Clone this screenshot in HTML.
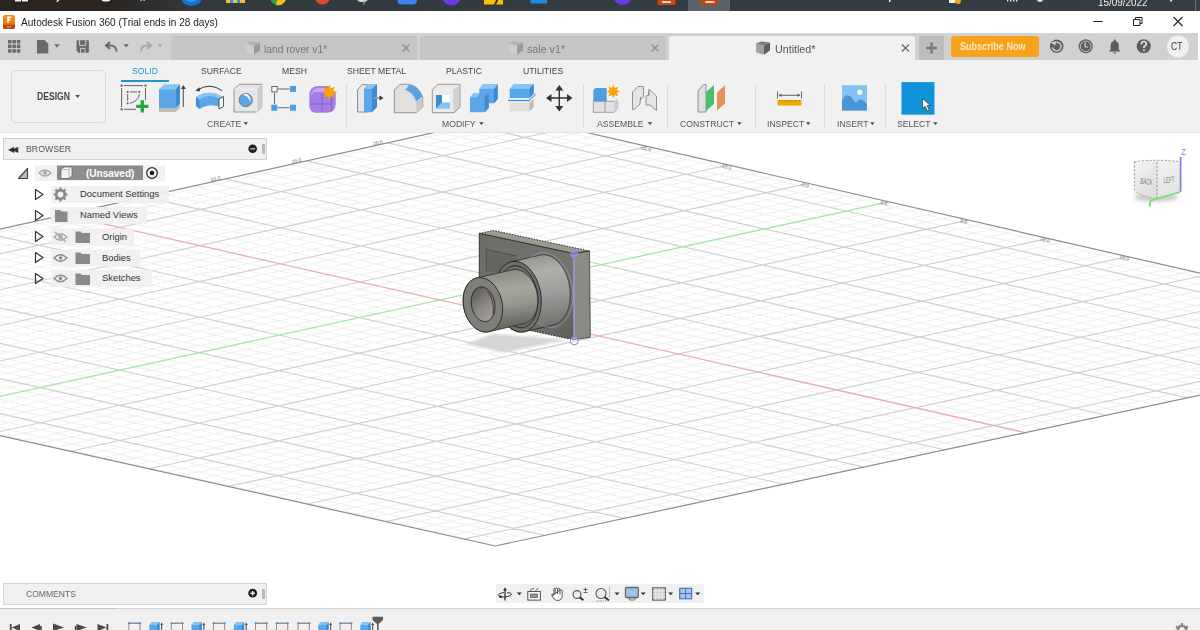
<!DOCTYPE html>
<html><head><meta charset="utf-8">
<style>
*{margin:0;padding:0;box-sizing:border-box}
html,body{width:1200px;height:630px;overflow:hidden;background:#fff;font-family:"Liberation Sans",sans-serif;position:relative}
.a{position:absolute}
#taskbar{left:0;top:0;width:1200px;height:11px;background:linear-gradient(90deg,#2b231e 0,#2c2520 110px,#323a3e 200px,#343e44 100%)}
#title{left:0;top:11px;width:1200px;height:22px;background:#fff}
#tool{left:0;top:33px;width:1198px;height:27px;background:#d1d1d1}
.tab{top:36px;height:24px;width:246px;background:#c5c5c5;border-radius:3px 3px 0 0}
.tabt{font-size:11.5px;color:#777;top:7px;white-space:nowrap;transform-origin:0 0}
#ribbon{left:0;top:60px;width:1200px;height:73px;background:#f1f1f1;border-bottom:1px solid #e2e2e2}
.rt{font-size:9.8px;color:#444;top:5px;white-space:nowrap;transform:scaleX(0.88);transform-origin:0 0}
.gl{font-size:9.8px;color:#555;top:58px;white-space:nowrap;transform:scaleX(0.88);transform-origin:0 0}
.sep{top:24px;width:1px;height:44px;background:#dcdcdc}
#vp{left:0;top:133px;width:1200px;height:475px;background:#fff;overflow:hidden}
#timeline{left:0;top:608px;width:1200px;height:22px;background:#f0f0f0;border-top:1px solid #d6d6d6}
.row{height:17px;background:rgba(240,240,240,0.85)}
.rtx{font-size:9.4px;color:#333;top:2px;white-space:nowrap}
</style></head><body>
<div id="taskbar" class="a" style="overflow:hidden">
<svg class="a" style="left:0;top:0" width="1200" height="11">
 <rect x="688" y="0" width="42" height="11" fill="#5b6368"/>
 <rect x="1195" y="0" width="1" height="11" fill="#6a7378"/>
 <g fill="#f2f2f2"><rect x="15" y="-2" width="6" height="3.5"/><rect x="22" y="-2" width="6" height="3.5"/><path d="M56 1.5 l3 -3 l1.5 0.5 l-3 3z"/><ellipse cx="106" cy="-0.5" rx="4.5" ry="2"/><rect x="140.5" y="-1" width="1.2" height="2"/><rect x="143.5" y="-1" width="1.2" height="2"/></g>
 <ellipse cx="191.5" cy="-3" rx="10.5" ry="9" fill="#1c6fcf"/>
 <ellipse cx="191.5" cy="-4" rx="7" ry="6" fill="#2a9be8"/>
 <rect x="226" y="-4" width="19" height="7" fill="#f2c33a"/><rect x="230" y="-4" width="3" height="7" fill="#3e8bd6"/><rect x="237" y="-4" width="3" height="7" fill="#3e8bd6"/>
 <circle cx="278" cy="-3" r="8" fill="#2da64a"/><path d="M278 -3 L286 -1 A8 8 0 0 1 276 5z" fill="#f4c020"/>
 <circle cx="322.5" cy="-3" r="7.5" fill="#e2492a"/>
 <path d="M354 -2 h17 l-6 4 h-5z" fill="#bfe0f5"/><rect x="363.5" y="0" width="1" height="5" fill="#e0a040"/>
 <rect x="397.5" y="-6" width="19.5" height="10.5" rx="4" fill="#3d7ef2"/>
 <circle cx="451.5" cy="-4" r="9.5" fill="#6a3be2"/><circle cx="451.5" cy="-5" r="4.5" fill="#fff"/>
 <rect x="484" y="-4" width="19" height="8.5" fill="#f6c200"/><path d="M494 4.5 l3 -6 h2 l-3 6z" fill="#222"/>
 <rect x="530.5" y="-4" width="16.5" height="7.5" fill="#1e8ae6"/>
 <circle cx="622.5" cy="-4" r="9" fill="#6a3be2"/><circle cx="622.5" cy="-5" r="4" fill="#fff"/>
 <rect x="657.5" y="-4" width="18" height="9" rx="1" fill="#c2460e"/>
 <rect x="701" y="-4" width="17" height="9" rx="1" fill="#c2460e"/>
 <g fill="#f0d0b0"><rect x="662" y="1" width="9" height="2"/><rect x="705.5" y="1" width="9" height="2"/></g>
 <g fill="#f2f2f2"><rect x="889" y="-1" width="1.5" height="3"/><rect x="949" y="-1" width="6" height="4"/><rect x="1007" y="-1" width="1.3" height="2.5"/><rect x="1010" y="-1" width="1.3" height="2.5"/><rect x="1013" y="-1" width="1.3" height="2.5"/><rect x="1016" y="-1" width="1.3" height="2.5"/><circle cx="1040" cy="-1" r="3"/><path d="M1169 -1 l2 3 l2 -3z"/></g>
 <circle cx="958" cy="1" r="3" fill="#f3a21a"/>
</svg>
<div class="a" style="left:1098px;top:-3.6px;font-size:11.5px;color:#f2f2f2;white-space:nowrap;transform:scaleX(0.86);transform-origin:0 0">15/09/2022</div>
</div>
<div id="title" class="a">
  <svg class="a" style="left:2px;top:3px" width="15" height="17"><defs><linearGradient id="fg" x1="0" y1="0" x2="0" y2="1"><stop offset="0" stop-color="#f7931e"/><stop offset="1" stop-color="#e4601a"/></linearGradient></defs><rect x="1" y="1" width="12" height="14" rx="2" fill="url(#fg)"/><path d="M1 10.8 H13 V13 Q13 15 11 15 H3 Q1 15 1 13Z" fill="#b9450f"/><path d="M6 8.8 V3.2 H9.2 M6 5.8 H8.5" fill="none" stroke="#fff" stroke-width="1.5"/><path d="M5 12.9 h4" stroke="#f3c8a8" stroke-width="0.9"/></svg>
  <div class="a" style="left:20.5px;top:6px;font-size:10.4px;color:#1a1a1a;white-space:nowrap;transform:scaleX(0.97);transform-origin:0 0">Autodesk Fusion 360 (Trial ends in 28 days)</div>
</div>
<div id="tool" class="a"></div>
<div class="a tab" style="left:171px"><div class="a tabt" style="left:93.2px;transform:scaleX(0.89)">land rover v1*</div></div>
<div class="a tab" style="left:420px"><div class="a tabt" style="left:106.7px;transform:scaleX(0.93)">sale v1*</div></div>
<div class="a tab" style="left:669px;background:#f0f0f0"><div class="a tabt" style="left:106px;color:#555;transform:scaleX(0.93)">Untitled*</div></div>
<div class="a" style="left:919px;top:36px;width:25px;height:24px;background:#bdbdbd;border-radius:2px"></div>
<div class="a" style="left:951px;top:36px;width:88px;height:21px;background:#f7a21b;border-radius:3px"></div><div class="a" style="left:960px;top:40.2px;color:#fde6c2;font-size:10.5px;font-weight:bold;white-space:nowrap;transform:scaleX(0.865);transform-origin:0 0">Subscribe Now</div>

<!-- TITLE/TOOLBAR ICONS -->
<svg class="a" style="left:0;top:0" width="1200" height="62">
 <g fill="#6a6a6a">
  <rect x="8" y="40" width="3.5" height="3.5"/><rect x="12.4" y="40" width="3.5" height="3.5"/><rect x="16.8" y="40" width="3.5" height="3.5"/>
  <rect x="8" y="44.6" width="3.5" height="3.5"/><rect x="12.4" y="44.6" width="3.5" height="3.5"/><rect x="16.8" y="44.6" width="3.5" height="3.5"/>
  <rect x="8" y="49.2" width="3.5" height="3.5"/><rect x="12.4" y="49.2" width="3.5" height="3.5"/><rect x="16.8" y="49.2" width="3.5" height="3.5"/>
  <path d="M37 40 h7.5 l3.8 3.8 v9.7 h-11.3z"/>
  <path d="M54.3 44.3 h5.3 l-2.65 3.2z"/>
  <path d="M76.5 41.2 q0 -1 1 -1 h10.4 q1 0 1 1 v10.6 q0 1 -1 1 h-9.4 l-2 -2z"/></g><path d="M79.6 40.4 V45.3 H85.8 V40.4 M80.6 52.8 V48.4 H85 V52.8" fill="none" stroke="#dadada" stroke-width="0.9"/><g fill="#6a6a6a">
  <path d="M123.5 44.3 h5.3 l-2.65 3.2z"/>
 </g>
 <path d="M116.5 51.5 Q116.5 45.5 110 45.5 H106.5 M110 42 L106 45.5 L110 49" fill="none" stroke="#6a6a6a" stroke-width="2"/>
 <path d="M141 51.5 Q141 45.5 147 45.5 H150.5 M147 42 L151 45.5 L147 49" fill="none" stroke="#a9a9a9" stroke-width="2"/>
 <path d="M157.4 44.3 h5.3 l-2.65 3.2z" fill="#a9a9a9"/>
 <!-- window controls -->
 <path d="M1093.3 21.5 h9.4" stroke="#222" stroke-width="1"/>
 <path d="M1133.5 19.5 h6.5 v6 h-6.5z M1135.5 19.5 v-2 h6.5 v6 h-2" fill="none" stroke="#222" stroke-width="1"/>
 <path d="M1173.5 17 L1182.5 26 M1182.5 17 L1173.5 26" stroke="#222" stroke-width="1.1"/>
 <!-- tab icons -->
 <g><path d="M246 43.5 L254 45.5 V54.7 L246 52.5Z" fill="#cdcdcd"/><path d="M254 45.5 L260 42.5 V50.5 L254 54.7Z" fill="#9c9c9c"/><path d="M246 43.5 L251 41.5 L260 42.5 L254 45.5Z" fill="#b2b2b2"/><path d="M509 43.5 L517 45.5 V54.7 L509 52.5Z" fill="#cdcdcd"/><path d="M517 45.5 L523 42.5 V50.5 L517 54.7Z" fill="#9c9c9c"/><path d="M509 43.5 L514 41.5 L523 42.5 L517 45.5Z" fill="#b2b2b2"/><path d="M756 43.5 L764 45.5 V54.7 L756 52.5Z" fill="#a0a0a0"/><path d="M764 45.5 L770 42.5 V50.5 L764 54.7Z" fill="#5e5e5e"/><path d="M756 43.5 L761 41.5 L770 42.5 L764 45.5Z" fill="#7c7c7c"/></g>
 <g stroke="#8a8a8a" stroke-width="1.2">
  <path d="M402.5 44.5 L409.5 51.5 M409.5 44.5 L402.5 51.5"/>
  <path d="M651.5 44.5 L658.5 51.5 M658.5 44.5 L651.5 51.5"/>
  <path d="M902 44.5 L909 51.5 M909 44.5 L902 51.5" stroke="#666"/>
 </g>
 <path d="M931.5 42.5 v11 M926 48 h11" stroke="#7b7b7b" stroke-width="2.3"/>
 <!-- right icons -->
 <circle cx="1056.7" cy="46.3" r="6.8" fill="#5e5e5e"/>
 <path d="M1052.5 47.5 a4.3 4.3 0 1 0 4 -5.3" fill="none" stroke="#d1d1d1" stroke-width="1.4"/>
 <path d="M1051 42.5 l4 3 l1.5 -4.5z" fill="#d1d1d1"/>
 <circle cx="1085.7" cy="46.3" r="7" fill="#5e5e5e"/>
 <circle cx="1085.7" cy="46.3" r="5.3" fill="none" stroke="#d1d1d1" stroke-width="0.9"/>
 <path d="M1085.2 42.5 v4.5 h3" fill="none" stroke="#d1d1d1" stroke-width="1.2"/>
 <path d="M1108.8 51.5 h11.8 l-1.8 -2 v-4 q0 -4.2 -4.1 -4.6 q-4.1 0.4 -4.1 4.6 v4z" fill="#5e5e5e"/>
 <circle cx="1114.7" cy="40.6" r="1.1" fill="#5e5e5e"/>
 <path d="M1112.7 52.5 h4 l-2 1.5z" fill="#5e5e5e"/>
 <circle cx="1143.7" cy="46.3" r="7" fill="#5e5e5e"/>
 <path d="M1141.3 44.3 q0 -2.8 2.5 -2.8 q2.5 0 2.5 2.4 q0 1.6 -2.3 2.6 v1.6" fill="none" stroke="#e0e0e0" stroke-width="1.6"/>
 <circle cx="1143.9" cy="50.3" r="1" fill="#e0e0e0"/>
 <circle cx="1178" cy="46.5" r="11" fill="#f0f0f0"/>
</svg>
<div class="a" style="left:1170.5px;top:41px;font-size:10px;color:#333;transform:scaleX(0.85);transform-origin:0 0">CT</div>
<div id="ribbon" class="a">
  <div class="a" style="left:11px;top:10px;width:95px;height:53px;border:1px solid #dadada;border-radius:4px"></div>
  <div class="a" style="left:37px;top:31px;font-size:10px;font-weight:bold;color:#444;transform:scaleX(0.86);transform-origin:0 0">DESIGN</div>
  <div class="a rt" style="left:132px;color:#1f96d3">SOLID</div>
  <div class="a" style="left:121px;top:20px;width:48px;height:2px;background:#1f96d3"></div>
  <div class="a rt" style="left:201px">SURFACE</div>
  <div class="a rt" style="left:282px">MESH</div>
  <div class="a rt" style="left:347px">SHEET METAL</div>
  <div class="a rt" style="left:446px">PLASTIC</div>
  <div class="a rt" style="left:523px">UTILITIES</div>
  <div class="a gl" style="left:207px">CREATE</div>
  <div class="a gl" style="left:442px">MODIFY</div>
  <div class="a gl" style="left:597px">ASSEMBLE</div>
  <div class="a gl" style="left:680px">CONSTRUCT</div>
  <div class="a gl" style="left:767px">INSPECT</div>
  <div class="a gl" style="left:837px">INSERT</div>
  <div class="a gl" style="left:897px">SELECT</div>
  <div class="a sep" style="left:346px"></div>
  <div class="a sep" style="left:583px"></div>
  <div class="a sep" style="left:667px"></div>
  <div class="a sep" style="left:755px"></div>
  <div class="a sep" style="left:824px"></div>
  <div class="a sep" style="left:885px"></div>
</div>

<!-- RIBBON ICONS -->
<svg class="a" style="left:0;top:0" width="1200" height="133">
 <!-- sketch -->
 <g fill="#555"><rect x="120.6" y="84.6" width="2" height="2"/><rect x="144.5" y="84.6" width="2" height="2"/><rect x="120.6" y="108.3" width="2" height="2"/>
 <rect x="126.8" y="91" width="1.8" height="1.8"/><rect x="138.4" y="91" width="1.8" height="1.8"/><rect x="126.8" y="102.4" width="1.8" height="1.8"/></g>
 <path d="M124 85.6 H143 M121.6 88 V107 M124 109.3 H136 M145.5 88 V100 M130 91.9 H137 M127.7 94 V101 M139.3 94 Q139 101 130 103.3" fill="none" stroke="#555" stroke-width="0.9"/>
 <path d="M140.6 100.3 h3.4 v4.4 h4.4 v3.4 h-4.4 v4.4 h-3.4 v-4.4 h-4.4 v-3.4 h4.4z" fill="#22a845"/>
 <!-- extrude -->
 <path d="M159 108 h16.3 l4.7 -4 v4 l-4.7 4 h-16.3z" fill="#bdbdbd"/>
 <path d="M159 89.3 L164 84.3 H180 L175.3 89.3Z" fill="#86c6f4"/>
 <rect x="159" y="89.3" width="16.3" height="18.7" fill="#5aa6e6"/>
 <path d="M175.3 89.3 L180 84.3 V104 L175.3 108Z" fill="#3c8cd2"/>
 <path d="M183.3 107 V88" stroke="#555" stroke-width="1.1"/><path d="M180.8 89 L183.3 85 L185.8 89Z" fill="#444"/>
 <!-- revolve -->
 <path d="M222 90.7 Q210 82 197.5 90" fill="none" stroke="#333" stroke-width="1"/><path d="M195.5 90.5 L199.5 87.3 L199.8 91.5Z" fill="#333"/>
 <path d="M196 97 Q209 88.5 223 97 L223 108 Q210 102 200 109 L196 106Z" fill="#5aa6e6"/>
 <path d="M196 97 Q209 88.5 223 97 L219.5 99 Q209 93 199.5 99.5Z" fill="#86c6f4"/>
 <path d="M196 97 L199.5 99.5 V109 L196 106Z" fill="#3c8cd2"/>
 <path d="M219 99 L223.5 96.5 V106.5 L219 109Z" fill="#fff" stroke="#333" stroke-width="0.8"/>
 <!-- hole -->
 <path d="M234 89.3 L239 84.3 H261.7 V107 L256.7 112 H234Z" fill="#e6e6e6" stroke="#8a8a8a" stroke-width="0.9"/>
 <path d="M256.7 89.3 L261.7 84.3 V107 L256.7 112Z" fill="#d0d0d0"/>
 <path d="M234 89.3 H256.7 V112" fill="none" stroke="#f4f4f4" stroke-width="0.7"/>
 <circle cx="245.7" cy="100" r="6.6" fill="#5aa6e6" stroke="#6f6f6f" stroke-width="0.9"/>
 <path d="M242.5 94.8 Q249 95.5 250.5 103 Q251.5 96 245.7 93.6Z" fill="#fff"/>
 <!-- pattern -->
 <rect x="271.8" y="86.5" width="5.4" height="5.4" fill="#fff" stroke="#666" stroke-width="1"/>
 <g fill="#4aa0e2"><rect x="290" y="86" width="6" height="6"/><rect x="271.3" y="104.7" width="6" height="6"/><rect x="290" y="104.7" width="6" height="6"/></g>
 <path d="M278 89 H289.5 M274.5 92.5 V104 M278 107.7 H289.5" stroke="#666" stroke-width="1"/>
 <!-- form -->
 <path d="M309.3 96 Q309.3 86 318 86 H328 L335.7 93 V104 Q335.7 112.7 326 112.7 H316 Q309.3 112.7 309.3 105Z" fill="#a47de6"/>
 <path d="M311 96 Q312 88 318.5 88 H327 L331 92 H314Z" fill="#c6a6f4"/>
 <path d="M322 93 V112 M310 104 H332 M331.5 95 V111" stroke="#7f56c8" stroke-width="0.8"/>
 <path d="M329.3 84.3 l1.5 4 l4 -1.5 l-1.5 4 l4 1.5 l-4 1.5 l1.5 4 l-4 -1.5 l-1.5 4 l-1.5 -4 l-4 1.5 l1.5 -4 l-4 -1.5 l4 -1.5 l-1.5 -4 l4 1.5z" fill="#f5a300"/>
 <!-- press pull -->
 <path d="M357.5 90 L362 84.5 H367 V112 H357.5Z" fill="#e6e6e6" stroke="#888" stroke-width="0.9"/>
 <path d="M364 88.7 L367.5 84 H377 L372 88.7Z" fill="#86c6f4"/>
 <rect x="364" y="88.7" width="8" height="23.6" fill="#5aa6e6"/>
 <path d="M372 88.7 L377 84 V107 L372 112.3Z" fill="#3c8cd2"/>
 <path d="M374 98 H380" stroke="#999" stroke-width="1.6"/><path d="M379.5 95.5 L383.5 98 L379.5 100.5Z" fill="#333"/>
 <!-- fillet -->
 <path d="M394.3 90 L400 84.3 H408 Q418 85 422.7 97 V107 L416.5 112.7 H394.3Z" fill="#e0e0e0" stroke="#8a8a8a" stroke-width="0.9"/>
 <path d="M405.5 90 L409 84.8 Q418.5 86 422.5 96.5 L416 101.5 Q414 93 405.5 90Z" fill="#56a4e6"/>
 <path d="M416 101.5 L422.5 97 V107 L416.5 112.5Z" fill="#cacaca"/>
 <!-- shell -->
 <path d="M432.3 90 L438 84.3 H460 V107 L454.3 112.7 H432.3Z" fill="#ebebeb" stroke="#8a8a8a" stroke-width="0.9"/>
 <path d="M453 90 L459.5 84.8 V107 L453.5 112Z" fill="#d2d2d2"/>
 <rect x="436" y="95" width="14" height="13.7" fill="#fff"/>
 <path d="M436 95 H442 V102.5 L436 108.7Z" fill="#3c8cd2"/>
 <path d="M436 108.7 L441.5 102.5 H450 V108.7Z" fill="#82c3f3"/>
 <!-- combine -->
 <path d="M479.3 89 L483 84.3 H497.7 V99 L494 103.3 H479.3Z" fill="#5aa6e6"/>
 <path d="M494 89 L497.7 84.3 V99 L494 103.3Z" fill="#3c8cd2"/>
 <path d="M479.3 89 L483 84.3 H497.7 L494 89Z" fill="#86c6f4"/>
 <path d="M470 97.5 L474 93 H488.7 V108 L484.7 112.3 H470Z" fill="#5aa6e6"/>
 <path d="M484.7 97.5 L488.7 93 V108 L484.7 112.3Z" fill="#3c8cd2"/>
 <path d="M470 97.5 L474 93 H480 L477 97.5Z" fill="#86c6f4"/>
 <!-- split -->
 <path d="M509.7 89 L514 84 H533.7 V93.5 L529.5 98 H509.7Z" fill="#5aa6e6"/>
 <path d="M509.7 89 L514 84 H533.7 L529.5 89Z" fill="#86c6f4"/>
 <path d="M529.5 89 L533.7 84 V93.5 L529.5 98Z" fill="#3c8cd2"/>
 <path d="M508 100.5 H529 L535.7 94" fill="none" stroke="#c8e6fb" stroke-width="3"/>
 <path d="M508 100.5 H529 L535.7 94" fill="none" stroke="#3c8cd2" stroke-width="1"/>
 <path d="M509.7 102.5 H529.5 L533.7 99.3 V107 L529.5 111.3 H509.7Z" fill="#dedede"/>
 <path d="M529.5 102.5 L533.7 99.3 V107 L529.5 111.3Z" fill="#bdbdbd"/>
 <!-- move -->
 <path d="M559.3 88 V108 M549 98 H570" stroke="#333" stroke-width="1.4"/>
 <path d="M559.3 85 L563.3 90.5 H555.3Z M559.3 111.5 L563.3 106 H555.3Z M546 98 L551.5 94 V102Z M572.5 98 L567 94 V102Z" fill="#333"/>
 <!-- assemble -->
 <path d="M593.3 101.3 H617.7 V108.5 L614 112.3 H593.3Z" fill="#e2e2e2" stroke="#999" stroke-width="0.9"/>
 <path d="M605 101.5 V112" stroke="#999" stroke-width="0.9"/>
 <path d="M614 101.3 L617.7 98 V108.5 L614 112.3Z" fill="#cfcfcf"/>
 <path d="M593.3 92 Q593.3 88 597 88 H606.7 V101.3 H593.3Z" fill="#4c9de2"/>
 <path d="M613.3 84.5 l1.3 3.5 l3.5 -1.3 l-1.3 3.5 l3.5 1.3 l-3.5 1.3 l1.3 3.5 l-3.5 -1.3 l-1.3 3.5 l-1.3 -3.5 l-3.5 1.3 l1.3 -3.5 l-3.5 -1.3 l3.5 -1.3 l-1.3 -3.5 l3.5 1.3z" fill="#f5a300"/>
 <!-- joint -->
 <path d="M632.5 92 L638 86.5 H643.5 V97 L640 100 V104 L634 109.5 H632.5Z" fill="#e4e4e4" stroke="#888" stroke-width="0.9"/>
 <path d="M646 96 L649 95 V89 L656.5 96 V110.5 L650 105 H646Z" fill="#e4e4e4" stroke="#888" stroke-width="0.9"/>
 <path d="M648.5 91 V96 M640.5 97 V101" stroke="#4c9de2" stroke-width="1"/>
 <!-- construct -->
 <path d="M698 91 L703.5 84.5 H706 V112 H698Z" fill="#e0e0e0" stroke="#888" stroke-width="0.9"/>
 <path d="M706 92 L714 85 V104 L706 111Z" fill="#4cbf6a"/>
 <path d="M717 92.5 L725 85 V103.5 L717 110.5Z" fill="#e99258"/>
 <!-- inspect -->
 <path d="M777.5 91.5 V98.5 M801.5 91.5 V98.5 M779 95.3 H800" stroke="#666" stroke-width="1"/>
 <path d="M778.5 95.3 L781.5 93.5 V97Z M800.5 95.3 L797.5 93.5 V97Z" fill="#666"/>
 <rect x="777.5" y="100" width="24" height="5.5" fill="#f4a700"/>
 <path d="M779.5 100 v1.5 M782 100 v1.5 M784.5 100 v1.5 M787 100 v1.5 M789.5 100 v1.5 M792 100 v1.5 M794.5 100 v1.5 M797 100 v1.5 M799.5 100 v1.5" stroke="#a06a00" stroke-width="0.6"/>
 <!-- insert -->
 <rect x="842" y="85.2" width="25" height="25.4" fill="#80c4f5"/>
 <path d="M842 100 Q847 91.5 852 98 Q854 101 856 103 Q860 96.5 864 101 L867 104 V110.6 H842Z" fill="#4a95d6"/>
 <circle cx="859.8" cy="92.2" r="2.6" fill="#fdfde0"/>
 <!-- select -->
 <rect x="901.5" y="82.1" width="33" height="32.6" fill="#1193d9"/>
 <circle cx="916" cy="98" r="10" fill="none" stroke="#27a58a" stroke-width="0.8" stroke-dasharray="1 3" opacity="0.6"/>
 <path d="M922.5 98.5 V108.5 L925 106.2 L927.5 111 L929.3 110.2 L927 105.5 H930.3Z" fill="#fff" stroke="#333" stroke-width="0.7"/>
</svg>
<svg class="a" style="left:0;top:0" width="1200" height="133"><g fill="#444">
<path d="M75.3 95 h4.6 l-2.3 3z"/>
<path d="M243.6 122.2 h4.4 l-2.2 2.8z"/><path d="M479.2 122.2 h4.4 l-2.2 2.8z"/><path d="M647.8 122.2 h4.4 l-2.2 2.8z"/><path d="M737.2 122.2 h4.4 l-2.2 2.8z"/><path d="M806 122.2 h4.4 l-2.2 2.8z"/><path d="M870.2 122.2 h4.4 l-2.2 2.8z"/><path d="M933.2 122.2 h4.4 l-2.2 2.8z"/>
</g></svg>
<div id="vp" class="a"></div>
<div class="a" style="left:0;top:133px;width:1200px;height:475px;overflow:hidden"><svg width="1200" height="630" viewBox="0 0 1200 630" style="position:absolute;left:0;top:-133px">
<path d="M-456.4 333.6L518.6 117.0M-440.4 337.2L534.8 120.7M-424.3 340.8L550.9 124.4M-392.2 348.0L583.2 131.8M-376.1 351.6L599.3 135.5M-360.1 355.1L615.4 139.2M-344.1 358.7L631.6 142.9M-312.0 365.9L663.8 150.3M-296.0 369.4L679.9 153.9M-280.0 373.0L695.9 157.6M-264.0 376.6L712.0 161.3M-232.1 383.7L744.1 168.7M-216.1 387.3L760.2 172.4M-200.1 390.8L776.2 176.1M-184.2 394.4L792.3 179.7M-152.3 401.5L824.3 187.1M-136.3 405.1L840.4 190.8M-120.4 408.6L856.4 194.4M-104.5 412.2L872.4 198.1M-72.7 419.3L904.4 205.4M-56.8 422.8L920.3 209.1M-40.9 426.4L936.3 212.8M-25.0 429.9L952.3 216.4M6.7 437.0L984.2 223.8M22.6 440.6L1000.1 227.4M38.5 444.1L1016.1 231.1M54.3 447.6L1032.0 234.7M86.0 454.7L1063.8 242.0M101.8 458.2L1079.7 245.7M117.6 461.8L1095.6 249.3M133.5 465.3L1111.5 253.0M165.1 472.4L1143.3 260.3M180.9 475.9L1159.2 263.9M196.6 479.4L1175.0 267.5M212.4 482.9L1190.9 271.2M244.0 490.0L1222.6 278.4M259.7 493.5L1238.4 282.1M275.5 497.0L1254.3 285.7M291.2 500.5L1270.1 289.3M322.7 507.5L1301.7 296.6M338.4 511.0L1317.5 300.2M354.1 514.5L1333.3 303.8M369.8 518.1L1349.1 307.5M401.2 525.1L1380.6 314.7M416.9 528.6L1396.4 318.3M432.6 532.1L1412.1 321.9M448.3 535.6L1427.9 325.5M479.6 542.6L1459.4 332.8M-461.4 331.6L497.1 545.6M-445.6 328.1L513.0 542.2M-429.9 324.6L528.8 538.8M-398.3 317.6L560.6 532.0M-382.5 314.1L576.5 528.6M-366.7 310.6L592.4 525.2M-350.8 307.1L608.3 521.8M-319.2 300.0L640.1 515.0M-303.3 296.5L656.0 511.6M-287.5 293.0L672.0 508.2M-271.6 289.4L687.9 504.7M-239.8 282.4L719.9 497.9M-223.9 278.8L735.8 494.5M-208.0 275.3L751.8 491.1M-192.1 271.8L767.8 487.6M-160.2 264.7L799.9 480.8M-144.2 261.1L815.9 477.4M-128.3 257.6L831.9 473.9M-112.3 254.0L848.0 470.5M-80.3 246.9L880.1 463.6M-64.3 243.4L896.2 460.2M-48.3 239.8L912.3 456.7M-32.3 236.2L928.4 453.3M-0.2 229.1L960.6 446.4M15.8 225.5L976.8 442.9M31.9 222.0L992.9 439.5M48.0 218.4L1009.1 436.0M80.1 211.3L1041.4 429.1M96.2 207.7L1057.6 425.6M112.3 204.1L1073.8 422.2M128.5 200.5L1090.0 418.7M160.7 193.3L1122.4 411.8M176.9 189.7L1138.7 408.3M193.1 186.1L1154.9 404.8M209.2 182.6L1171.1 401.3M241.6 175.4L1203.7 394.4M257.8 171.8L1220.0 390.9M274.0 168.1L1236.3 387.4M290.3 164.5L1252.6 383.9M322.7 157.3L1285.2 376.9M339.0 153.7L1301.5 373.4M355.3 150.1L1317.9 369.9M371.5 146.5L1334.2 366.4M404.1 139.2L1367.0 359.4M420.4 135.6L1383.4 355.9M436.8 132.0L1399.8 352.4M453.1 128.3L1416.2 348.9M485.8 121.1L1449.0 341.9M502.1 117.4L1465.4 338.4" stroke="#f0f0f0" stroke-width="1" fill="none"/>
<path d="M-408.2 344.4L567.1 128.1M-328.1 362.3L647.7 146.6M-248.0 380.2L728.1 165.0M-168.2 398.0L808.3 183.4M-9.1 433.5L968.2 220.1M70.2 451.2L1047.9 238.4M149.3 468.8L1127.4 256.6M228.2 486.4L1206.7 274.8M307.0 504.0L1285.9 293.0M385.5 521.6L1364.8 311.1M463.9 539.1L1443.6 329.1M-414.1 321.1L544.7 535.4M-335.0 303.5L624.2 518.4M-255.7 285.9L703.9 501.3M-176.1 268.2L783.9 484.2M-96.3 250.5L864.1 467.1M-16.3 232.7L944.5 449.8M144.6 196.9L1106.2 415.2M225.4 179.0L1187.4 397.9M306.5 160.9L1268.9 380.4M387.8 142.9L1350.6 362.9M469.4 124.7L1432.6 345.4" stroke="#cfcfcf" stroke-width="1.15" fill="none"/>
<path d="M64.0 214.8L1025.2 432.6" stroke="#eeaab2" stroke-width="1.3" fill="none"/>
<path d="M-88.6 415.7L888.4 201.8" stroke="#a6e6a6" stroke-width="1.3" fill="none"/>
<path d="M-463.4 332.1L495.1 546.0L1474.9 336.3L511.6 115.3Z" stroke="#8c8c8c" stroke-width="1.2" fill="none"/>
<text x="640.2" y="150.6" font-family="Liberation Sans" font-size="5" fill="#666" transform="rotate(13 647.7 146.6)">-15.0</text><text x="720.6" y="169.0" font-family="Liberation Sans" font-size="5" fill="#666" transform="rotate(13 728.1 165.0)">-10.0</text><text x="800.8" y="187.4" font-family="Liberation Sans" font-size="5" fill="#666" transform="rotate(13 808.3 183.4)">-5.0</text><text x="880.9" y="205.8" font-family="Liberation Sans" font-size="5" fill="#666" transform="rotate(13 888.4 201.8)">0.0</text><text x="960.7" y="224.1" font-family="Liberation Sans" font-size="5" fill="#666" transform="rotate(13 968.2 220.1)">5.0</text><text x="1040.4" y="242.4" font-family="Liberation Sans" font-size="5" fill="#666" transform="rotate(13 1047.9 238.4)">10.0</text><text x="1119.9" y="260.6" font-family="Liberation Sans" font-size="5" fill="#666" transform="rotate(13 1127.4 256.6)">15.0</text><text x="210.9" y="178.5" font-family="Liberation Sans" font-size="5" fill="#666" transform="rotate(-12 225.4 179.0)">10.0</text><text x="292.0" y="160.4" font-family="Liberation Sans" font-size="5" fill="#666" transform="rotate(-12 306.5 160.9)">15.0</text><text x="373.3" y="142.4" font-family="Liberation Sans" font-size="5" fill="#666" transform="rotate(-12 387.8 142.9)">20.0</text><text x="454.9" y="124.2" font-family="Liberation Sans" font-size="5" fill="#666" transform="rotate(-12 469.4 124.7)">25.0</text>
</svg></div>
<svg class="a" style="left:0;top:0" width="1200" height="630">
<defs>
 <linearGradient id="cyl" gradientUnits="userSpaceOnUse" x1="0" y1="0" x2="0" y2="1" gradientTransform="matrix(7 -32 32 7 0 0)">
 </linearGradient>
 <linearGradient id="cylB" gradientUnits="userSpaceOnUse" x1="530" y1="255" x2="540" y2="335">
  <stop offset="0" stop-color="#8f8f88"/><stop offset="0.22" stop-color="#b0b0a8"/><stop offset="0.45" stop-color="#a0a099"/><stop offset="0.8" stop-color="#7a7a73"/><stop offset="1" stop-color="#5e5e58"/>
 </linearGradient>
 <linearGradient id="cylS" gradientUnits="userSpaceOnUse" x1="495" y1="272" x2="503" y2="333">
  <stop offset="0" stop-color="#8a8a83"/><stop offset="0.3" stop-color="#a6a69e"/><stop offset="0.55" stop-color="#979790"/><stop offset="0.85" stop-color="#6e6e68"/><stop offset="1" stop-color="#5d5d57"/>
 </linearGradient>
 <linearGradient id="plateF" gradientUnits="userSpaceOnUse" x1="480" y1="240" x2="575" y2="335">
  <stop offset="0" stop-color="#6d6d68"/><stop offset="0.6" stop-color="#75756f"/><stop offset="1" stop-color="#5f5f5a"/>
 </linearGradient>
 <linearGradient id="hole" gradientUnits="userSpaceOnUse" x1="472" y1="290" x2="494" y2="318">
  <stop offset="0" stop-color="#5d5a57"/><stop offset="0.55" stop-color="#8a8782"/><stop offset="1" stop-color="#a4a29c"/>
 </linearGradient>
 <filter id="blur" x="-20%" y="-50%" width="140%" height="200%"><feGaussianBlur stdDeviation="1.2"/></filter>
</defs>
<path d="M465.5 343.9L493.5 333.8L567.0 339.8L504.0 352.4Z" fill="#d4d4d4" filter="url(#blur)" opacity="0.95"/>
<path d="M479.3 233.4L573.5 253.5L589.5 251.0L493.5 230.5Z" fill="#9a9a93" stroke="#2a2a28" stroke-width="0.9" stroke-dasharray="1.6 1.2"/>
<path d="M573.5 253.5L589.5 251.0L590.3 337.2L573.5 339.8Z" fill="#8b8b85"/>
<path d="M589.5 251.0L590.3 337.2L573.5 339.8" fill="none" stroke="#3a3a38" stroke-width="0.8"/>
<path d="M479.3 233.4L573.5 253.5L573.5 339.8L479.3 319.5Z" fill="url(#plateF)"/>
<path d="M479.3 233.4L573.5 253.5L589.5 251.0" fill="none" stroke="#2a2a28" stroke-width="0.9"/>
<path d="M479.3 233.4L479.3 319.5" fill="none" stroke="#2a2a28" stroke-width="0.9"/>
<path d="M479.3 319.5L573.5 339.8" fill="none" stroke="#2a2a28" stroke-width="1" stroke-dasharray="1.6 1.2"/>
<path d="M486.4 272 L486.4 249.8 L517 256.3" fill="none" stroke="#2d2d2b" stroke-width="0.9"/>
<path d="M486.4 249.8 L486.4 272 L517 272 L517 256.3Z" fill="#666661"/>
<path d="M494.7 291.7L494.8 288.7L495.1 285.7L495.5 282.8L496.1 280.1L496.9 277.4L497.8 274.9L498.9 272.6L500.2 270.4L501.5 268.4L503.0 266.7L504.6 265.2L506.3 263.9L508.2 262.9L510.0 262.1L512.0 261.6L541.0 254.9L543.0 254.7L545.0 254.7L547.0 255.0L549.0 255.6L551.0 256.4L553.0 257.5L555.0 258.8L556.8 260.4L558.6 262.2L560.4 264.2L562.0 266.4L563.5 268.8L564.8 271.3L566.1 274.0L567.2 276.8L568.1 279.7L568.9 282.7L569.5 285.7L569.9 288.8L570.2 291.9L570.3 295.0L570.2 298.0L569.9 301.0L569.5 303.9L568.9 306.6L568.1 309.3L567.2 311.8L566.1 314.1L564.8 316.3L563.5 318.3L562.0 320.0L560.4 321.5L558.6 322.8L556.8 323.8L555.0 324.6L553.0 325.1L524.0 331.8L522.0 332.0L520.0 332.0L518.0 331.7L516.0 331.1L514.0 330.3L512.0 329.2L510.0 327.9L508.2 326.3L506.4 324.5L504.6 322.5L503.0 320.3L501.5 317.9L500.2 315.4L498.9 312.7L497.8 309.9L496.9 307.0L496.1 304.0L495.5 301.0L495.1 297.9L494.8 294.8Z" fill="url(#cylB)" stroke="#2b2b29" stroke-width="0.8"/>
<path d="M573.0 295.5L572.8 300.4L572.1 305.1L570.9 309.5L569.4 313.6L567.4 317.3L565.1 320.4L562.4 323.1L559.5 325.1L556.3 326.5L553.0 327.3L549.6 327.4L546.1 326.8L542.7 325.6L539.3 323.7L536.1 321.2L533.0 318.2L530.2 314.7L527.7 310.7L525.6 306.4L523.8 301.7L522.4 296.9L521.5 291.9L521.1 286.9L521.1 282.0L521.5 277.2L522.4 272.6L523.8 268.4L525.6 264.5L527.7 261.1L530.2 258.2L533.0 255.8L536.1 254.1L539.3 253.0L542.7 252.6L546.1 252.8L549.6 253.7L553.0 255.3L556.3 257.5L559.5 260.2L562.4 263.5L565.1 267.3L567.4 271.4L569.4 275.9L570.9 280.7L572.1 285.6L572.8 290.6L573.0 295.5Z" fill="rgba(190,170,240,0.10)" stroke="#b3a6e0" stroke-width="0.9" opacity="0.6"/>
<path d="M541.3 301.7L541.1 306.3L540.5 310.7L539.5 314.9L538.0 318.8L536.3 322.3L534.2 325.3L531.8 327.8L529.2 329.8L526.4 331.1L523.4 331.9L520.3 332.0L517.2 331.5L514.1 330.4L511.1 328.7L508.2 326.4L505.5 323.5L503.0 320.2L500.7 316.5L498.8 312.4L497.2 308.1L496.0 303.5L495.2 298.8L494.8 294.1L494.8 289.4L495.2 284.9L496.0 280.5L497.2 276.5L498.8 272.8L500.7 269.5L503.0 266.8L505.5 264.5L508.2 262.9L511.1 261.8L514.1 261.4L517.2 261.6L520.3 262.4L523.4 263.8L526.4 265.8L529.2 268.4L531.8 271.5L534.2 275.0L536.3 278.9L538.0 283.1L539.5 287.6L540.5 292.2L541.1 297.0L541.3 301.7Z" fill="#6e6e69" stroke="#222" stroke-width="0.9"/>
<path d="M538.0 301.0L537.8 305.0L537.3 308.9L536.4 312.6L535.2 316.0L533.7 319.1L531.9 321.7L529.9 323.9L527.6 325.7L525.2 326.9L522.6 327.6L520.0 327.7L517.3 327.2L514.7 326.3L512.1 324.8L509.6 322.8L507.2 320.3L505.1 317.4L503.2 314.1L501.5 310.6L500.1 306.7L499.1 302.7L498.4 298.6L498.0 294.5L498.0 290.4L498.4 286.4L499.1 282.6L500.1 279.1L501.5 275.8L503.2 272.9L505.1 270.5L507.2 268.5L509.6 267.1L512.1 266.1L514.7 265.7L517.3 265.9L520.0 266.6L522.6 267.8L525.2 269.6L527.6 271.8L529.9 274.5L531.9 277.6L533.7 281.0L535.2 284.7L536.4 288.6L537.3 292.7L537.8 296.8L538.0 301.0Z" fill="none" stroke="#222" stroke-width="0.9"/>
<path d="M463.1 300.6L463.2 298.3L463.5 296.0L463.8 293.8L464.3 291.6L465.0 289.6L465.8 287.7L466.7 285.9L467.8 284.3L468.9 282.8L470.2 281.5L471.6 280.4L473.0 279.4L474.6 278.6L476.1 278.1L511.2 270.0L512.9 269.6L514.6 269.5L516.3 269.5L518.0 269.8L519.7 270.3L521.4 270.9L523.1 271.8L524.8 272.9L526.3 274.1L527.9 275.5L529.3 277.1L530.7 278.8L532.0 280.7L533.1 282.6L534.2 284.7L535.1 286.9L535.9 289.1L536.6 291.5L537.1 293.8L537.4 296.2L537.7 298.5L537.8 300.9L537.7 303.2L537.4 305.5L537.1 307.7L536.6 309.9L535.9 311.9L535.1 313.8L534.2 315.6L533.1 317.2L532.0 318.7L530.7 320.0L529.3 321.1L527.9 322.1L526.3 322.9L524.8 323.4L489.7 331.5L488.0 331.9L486.3 332.0L484.6 332.0L482.9 331.7L481.2 331.2L479.5 330.6L477.8 329.7L476.1 328.6L474.6 327.4L473.0 326.0L471.6 324.4L470.2 322.7L468.9 320.8L467.8 318.9L466.7 316.8L465.8 314.6L465.0 312.4L464.3 310.0L463.8 307.7L463.5 305.3L463.2 303.0Z" fill="url(#cylS)" stroke="#2b2b29" stroke-width="0.8"/>
<path d="M502.6 309.0L502.5 312.6L501.9 316.0L501.1 319.2L499.9 322.1L498.4 324.8L496.6 327.1L494.6 329.0L492.4 330.4L490.0 331.4L487.5 331.9L484.9 332.0L482.2 331.5L479.6 330.6L477.0 329.2L474.6 327.4L472.3 325.2L470.1 322.6L468.3 319.7L466.6 316.6L465.3 313.2L464.2 309.6L463.5 306.0L463.2 302.4L463.2 298.8L463.5 295.3L464.2 292.0L465.3 288.9L466.6 286.1L468.3 283.6L470.1 281.5L472.3 279.9L474.6 278.6L477.0 277.9L479.6 277.6L482.2 277.8L484.9 278.5L487.5 279.6L490.0 281.2L492.4 283.2L494.6 285.6L496.6 288.4L498.4 291.4L499.9 294.7L501.1 298.2L501.9 301.8L502.5 305.4L502.6 309.0Z" fill="#7f7f79" stroke="#222" stroke-width="0.9"/>
<path d="M495.0 306.8L494.9 309.1L494.6 311.3L494.1 313.3L493.3 315.2L492.4 316.9L491.4 318.4L490.2 319.6L488.8 320.5L487.4 321.2L485.9 321.5L484.3 321.6L482.7 321.3L481.1 320.7L479.6 319.9L478.1 318.7L476.7 317.3L475.4 315.7L474.3 313.9L473.3 311.9L472.5 309.8L471.9 307.5L471.4 305.2L471.2 302.9L471.2 300.6L471.4 298.4L471.9 296.3L472.5 294.3L473.3 292.5L474.3 290.9L475.4 289.6L476.7 288.5L478.1 287.7L479.6 287.2L481.1 287.0L482.7 287.1L484.3 287.5L485.9 288.3L487.4 289.3L488.8 290.5L490.2 292.0L491.4 293.8L492.4 295.7L493.3 297.8L494.1 300.0L494.6 302.2L494.9 304.5L495.0 306.8Z" fill="url(#hole)" stroke="#222" stroke-width="0.9"/>
<path d="M487.4 291.4 Q495 300 493.1 314.3" fill="none" stroke="#2a2a2a" stroke-width="0.8"/>
<path d="M574.3 257.5 V337" stroke="#a48ce8" stroke-width="1.4" opacity="0.9"/>
<circle cx="574.3" cy="254.2" r="3.8" fill="rgba(170,140,240,0.55)" stroke="#9b82e6" stroke-width="1"/>
<circle cx="574.3" cy="340.8" r="3.9" fill="rgba(255,255,255,0.3)" stroke="#9b82e6" stroke-width="1.1"/>
<circle cx="544.5" cy="292" r="2.5" fill="none" stroke="#a493dc" stroke-width="0.7" opacity="0.7"/>
</svg>

<!-- BROWSER -->
<div class="a" style="left:3px;top:138px;width:264px;height:22px;background:#f0f0f0;border:1px solid #d0d0d0"></div>
<div class="a" style="left:8px;top:145px;font-size:8px;color:#333;letter-spacing:-2px">◀◀</div>
<div class="a" style="left:25.5px;top:143px;font-size:9.5px;color:#555;transform:scaleX(0.92);transform-origin:0 0">BROWSER</div>
<svg class="a" style="left:246px;top:142px" width="14" height="14"><circle cx="6.7" cy="6.8" r="4.3" fill="#1e1e1e"/><path d="M4.2 6.8 H9.2" stroke="#9a9a9a" stroke-width="1.8"/></svg>
<div class="a" style="left:262px;top:144px;width:3px;height:10px;background:#b8b8b8"></div>
<svg class="a" style="left:0;top:160px" width="170" height="130">
 <path d="M18.5 18.5 L27.5 8.5 L27.5 18.5 Z" fill="#bbb" stroke="#444" stroke-width="1.2" stroke-linejoin="round"/>
 <rect x="35" y="5" width="130" height="16" fill="#f0f0f0" fill-opacity="0.92"/>
 <rect x="57" y="5.5" width="86" height="14.5" fill="#8d8d8d"/>
 <path d="M39 13 Q45 7 51 13 Q45 19 39 13Z" fill="none" stroke="#aaa" stroke-width="1.3"/>
 <circle cx="45" cy="13" r="2" fill="#aaa"/>
 <path d="M61 9.5 L64 7 L72 7 L72 16 L69 18.5 L61 18.5 Z" fill="#f4f4f4" stroke="#666" stroke-width="0.8"/>
 <path d="M61 9.5 L69 9.5 L69 18.5 M69 9.5 L72 7" fill="none" stroke="#999" stroke-width="0.7"/>
 <circle cx="152" cy="13" r="5.3" fill="#f4f4f4" stroke="#333" stroke-width="1.3"/>
 <circle cx="152" cy="13" r="2.3" fill="#222"/>
 <g fill="#f0f0f0" fill-opacity="0.92">
  <rect x="51" y="26" width="118" height="17"/>
  <rect x="51" y="47" width="96" height="17"/>
  <rect x="51" y="68.5" width="83" height="17"/>
  <rect x="51" y="89.5" width="89" height="17"/>
  <rect x="51" y="110" width="101" height="17"/>
 </g>
 <g fill="none" stroke="#333" stroke-width="1.2" stroke-linejoin="round">
  <path d="M35.5 29.5 L43 34.5 L35.5 39.5 Z"/>
  <path d="M35.5 50.5 L43 55.5 L35.5 60.5 Z"/>
  <path d="M35.5 71.5 L43 76.5 L35.5 81.5 Z"/>
  <path d="M35.5 92.5 L43 97.5 L35.5 102.5 Z"/>
  <path d="M35.5 113.5 L43 118.5 L35.5 123.5 Z"/>
 </g>
 <g fill="#8a8a8a">
  <path d="M55 50 h5 l1.5 1.5 h6 v10.5 h-12.5z"/>
  <path d="M75.5 71.5 h5 l1.5 1.5 h8 v10 h-14.5z"/>
  <path d="M75.5 92.5 h5 l1.5 1.5 h8 v10 h-14.5z"/>
  <path d="M75.5 113.5 h5 l1.5 1.5 h8 v10 h-14.5z"/>
 </g>
 <g>
  <circle cx="60.5" cy="34.5" r="4.3" fill="none" stroke="#8a8a8a" stroke-width="2.8"/>
  <path d="M60.5 27.5 v3 M60.5 38.5 v3 M53.5 34.5 h3 M64.5 34.5 h3 M55.5 29.5 l2 2 M63.5 37.5 l2 2 M55.5 39.5 l2 -2 M63.5 31.5 l2 -2" stroke="#8a8a8a" stroke-width="2.2"/>
 </g>
 <g fill="none" stroke="#a8a8a8" stroke-width="1.3">
  <path d="M54 77 Q60.5 70.5 67 77 Q60.5 83.5 54 77Z"/><circle cx="60.5" cy="77" r="1.6" fill="#a8a8a8"/><path d="M55 72 L66 82"/>
  <path d="M54 98 Q60.5 91.5 67 98 Q60.5 104.5 54 98Z" stroke="#8c8c8c"/><circle cx="60.5" cy="98" r="1.8" fill="#8c8c8c" stroke="none"/>
  <path d="M54 118.5 Q60.5 112 67 118.5 Q60.5 125 54 118.5Z" stroke="#8c8c8c"/><circle cx="60.5" cy="118.5" r="1.8" fill="#8c8c8c" stroke="none"/>
 </g>
</svg>
<div class="a" style="left:86px;top:168px;font-size:10px;font-weight:bold;color:#fff">(Unsaved)</div>
<div class="a rtx" style="left:80px;top:188px">Document Settings</div>
<div class="a rtx" style="left:80px;top:209px">Named Views</div>
<div class="a rtx" style="left:102px;top:230.5px">Origin</div>
<div class="a rtx" style="left:102px;top:251.5px">Bodies</div>
<div class="a rtx" style="left:102px;top:272px">Sketches</div>
<!-- COMMENTS -->
<div class="a" style="left:3px;top:583px;width:264px;height:22px;background:#f0f0f0;border:1px solid #d4d4d4"></div>
<div class="a" style="left:25.7px;top:588px;font-size:9.5px;color:#666;transform:scaleX(0.9);transform-origin:0 0">COMMENTS</div>
<svg class="a" style="left:246px;top:586px" width="14" height="14"><circle cx="6.7" cy="7.2" r="4.4" fill="#1e1e1e"/><path d="M4.4 7.2 H9 M6.7 4.9 V9.5" stroke="#e8e8e8" stroke-width="1.5"/></svg>
<div class="a" style="left:262px;top:589px;width:3px;height:10px;background:#b8b8b8"></div>
<div id="timeline" class="a"></div>
<!-- VIEWCUBE -->
<svg class="a" style="left:1110px;top:140px" width="90" height="75">
 <defs><filter id="vb" x="-50%" y="-50%" width="200%" height="200%"><feGaussianBlur stdDeviation="2.2"/></filter>
 <linearGradient id="vcL" x1="0" y1="0" x2="0.6" y2="1"><stop offset="0" stop-color="#f4f4f4"/><stop offset="1" stop-color="#dedede"/></linearGradient>
 <linearGradient id="vcR" x1="0" y1="0" x2="0.6" y2="1"><stop offset="0" stop-color="#f6f6f6"/><stop offset="1" stop-color="#e4e4e4"/></linearGradient></defs>
 <ellipse cx="46" cy="57" rx="22" ry="4.5" fill="#bdbdbd" filter="url(#vb)" opacity="0.85"/>
 <path d="M24.4 21.7 Q47 19.5 70.6 21.7 V51.7 L47 58.9 Q30 55 25.6 52.2Z" fill="url(#vcR)"/>
 <path d="M24.4 21.7 L47 22 V58.9 Q30 55 25.6 52.2Z" fill="url(#vcL)"/>
 <path d="M24.4 21.7 Q47 18.8 70.6 21.7 M24.4 21.7 V52.2 M47 22 V58.9" fill="none" stroke="#8a8a8a" stroke-width="0.9" stroke-dasharray="2.2 1.6"/>
 <path d="M25.6 52.2 Q33 56 47 58.9" fill="none" stroke="#999" stroke-width="0.8" stroke-dasharray="2.2 1.6"/>
 <path d="M70.6 17 V51.7" stroke="#7b7bee" stroke-width="1.7"/>
 <path d="M70.2 52 L40.5 60.5 L39.5 66.7" fill="none" stroke="#74dc74" stroke-width="1.7"/>
 <text x="0" y="0" font-family="Liberation Sans" font-size="9.5" fill="#8b8be6" transform="translate(71 14.5) scale(0.85 1)">Z</text>
 <text x="0" y="0" font-family="Liberation Sans" font-size="10" fill="#7a7a7a" transform="translate(30 43.8) rotate(6) scale(0.45 0.85)">BACK</text>
 <text x="0" y="0" font-family="Liberation Sans" font-size="10" fill="#7a7a7a" transform="translate(53.8 43.3) rotate(-5) scale(0.45 0.85)">LEFT</text>
</svg>
<!-- NAVBAR -->
<div class="a" style="left:496px;top:584px;width:208px;height:19px;background:#f0f0f0"></div>
<svg class="a" style="left:0;top:0" width="1200" height="630">
 <g fill="#333">
  <path d="M516.8 592.4 h5 l-2.5 2.8z"/><path d="M614.5 592.4 h5 l-2.5 2.8z"/><path d="M640.7 592.4 h5 l-2.5 2.8z"/><path d="M668.2 592.4 h5 l-2.5 2.8z"/><path d="M695.2 592.4 h5 l-2.5 2.8z"/>
 </g>
 <path d="M505 589 V600.5" stroke="#333" stroke-width="1.3"/><path d="M503 590.5 L505 587.3 L507 590.5Z" fill="#333"/>
 <path d="M504 592.5 Q498 593.5 498.5 595.5 Q500 597.5 505 597 Q511.5 596 511.5 594 Q511 592.5 507 592.7" fill="none" stroke="#333" stroke-width="1"/>
 <circle cx="500.5" cy="596.8" r="1.3" fill="#222"/>
 <rect x="527.8" y="591.5" width="12.6" height="8.6" fill="#f6f6f6" stroke="#555" stroke-width="1"/>
 <rect x="530.6" y="594" width="7" height="3.6" fill="#999" stroke="#555" stroke-width="0.7"/>
 <path d="M530 590.5 L534 588 M535.5 590.5 L538.5 588.5" stroke="#555" stroke-width="1"/>
 <path d="M552 596 Q551 594 553 594 L554 595 V589.5 Q554 588.3 555.2 588.5 V594 M555.2 588.5 Q556.5 587.3 557.5 588.5 V594 M557.5 588.8 Q559 588 560 589.2 V594.5 M560 590 Q561.5 589.5 562.2 590.5 V595.5 Q562.2 600.2 558 600.4 H556.5 Q554 600 552 596Z" fill="#fff" stroke="#444" stroke-width="0.9"/>
 <circle cx="577" cy="594.5" r="3.9" fill="#e8f2f2" stroke="#555" stroke-width="1.1"/>
 <path d="M579.8 597.3 L583.3 600.3" stroke="#333" stroke-width="2"/>
 <path d="M585.5 587.5 v4 M583.5 589.5 h4 M583.5 592.5 h4" stroke="#444" stroke-width="0.8"/>
 <circle cx="601" cy="593.5" r="5" fill="#e4f0f0" stroke="#555" stroke-width="1.1"/>
 <path d="M604.5 597 L609 600.5" stroke="#333" stroke-width="2"/>
 <path d="M596 601 H607 M609.5 587 V598" stroke="#777" stroke-width="0.8" stroke-dasharray="1.2 1"/>
 <rect x="625.5" y="587.5" width="12.8" height="10" rx="1" fill="#9ec3ea" stroke="#666" stroke-width="1.3"/>
 <path d="M629 600 h6 v-2 h-6z" fill="#eee" stroke="#555" stroke-width="0.8"/>
 <rect x="652.6" y="587.8" width="12.8" height="12.3" fill="#c8c8c8" stroke="#555" stroke-width="1"/>
 <path d="M655.8 588 V600 M659 588 V600 M662.2 588 V600 M652.6 590.9 H665.4 M652.6 594 H665.4 M652.6 597 H665.4" stroke="#f6f6f6" stroke-width="0.8"/>
 <rect x="679.7" y="588.3" width="12" height="10.5" fill="#a8c8ee" stroke="#3f6fb5" stroke-width="1.1"/>
 <path d="M685.7 588.3 V598.8 M679.7 593.5 H691.7" stroke="#3f6fb5" stroke-width="1"/>
</svg>
<!-- TIMELINE -->
<svg class="a" style="left:0;top:0" width="1200" height="630">
 <path d="M0 608.5 H117" stroke="#c4c4c4" stroke-width="1"/>
 <g fill="#4a4a4a">
  <rect x="9.8" y="624" width="1.8" height="7"/><path d="M20 624 V631 L11.6 627.5Z"/>
  <path d="M40 624 V631 L31.4 627.5Z"/><rect x="40" y="626" width="1.7" height="5"/>
  <path d="M53 623.5 V631 L64 627.5Z"/>
  <rect x="74.8" y="626" width="1.7" height="5"/><path d="M76.5 624 V631 L86.7 627.5Z"/>
  <path d="M97.5 624 V631 L106.5 627.5Z"/><rect x="106.5" y="624" width="1.8" height="7"/>
 </g>
 <g transform="translate(128,0)"><path d="M1 623.2 H12" stroke="#555" stroke-width="0.9"/><path d="M0.8 624 V631 M12 624 V631" stroke="#888" stroke-width="0.9"/><path d="M12 625.5 V631" stroke="#e08080" stroke-width="0.9" stroke-dasharray="1.2 1"/><rect x="0" y="622.3" width="1.8" height="1.8" fill="#3a8ee0"/><rect x="11.2" y="622.3" width="1.8" height="1.8" fill="#3a8ee0"/></g><g transform="translate(170.5,0)"><path d="M1 623.2 H12" stroke="#555" stroke-width="0.9"/><path d="M0.8 624 V631 M12 624 V631" stroke="#888" stroke-width="0.9"/><path d="M12 625.5 V631" stroke="#e08080" stroke-width="0.9" stroke-dasharray="1.2 1"/><rect x="0" y="622.3" width="1.8" height="1.8" fill="#3a8ee0"/><rect x="11.2" y="622.3" width="1.8" height="1.8" fill="#3a8ee0"/></g><g transform="translate(212.6,0)"><path d="M1 623.2 H12" stroke="#555" stroke-width="0.9"/><path d="M0.8 624 V631 M12 624 V631" stroke="#888" stroke-width="0.9"/><path d="M12 625.5 V631" stroke="#e08080" stroke-width="0.9" stroke-dasharray="1.2 1"/><rect x="0" y="622.3" width="1.8" height="1.8" fill="#3a8ee0"/><rect x="11.2" y="622.3" width="1.8" height="1.8" fill="#3a8ee0"/></g><g transform="translate(254.7,0)"><path d="M1 623.2 H12" stroke="#555" stroke-width="0.9"/><path d="M0.8 624 V631 M12 624 V631" stroke="#888" stroke-width="0.9"/><path d="M12 625.5 V631" stroke="#e08080" stroke-width="0.9" stroke-dasharray="1.2 1"/><rect x="0" y="622.3" width="1.8" height="1.8" fill="#3a8ee0"/><rect x="11.2" y="622.3" width="1.8" height="1.8" fill="#3a8ee0"/></g><g transform="translate(275.7,0)"><path d="M1 623.2 H12" stroke="#555" stroke-width="0.9"/><path d="M0.8 624 V631 M12 624 V631" stroke="#888" stroke-width="0.9"/><path d="M12 625.5 V631" stroke="#e08080" stroke-width="0.9" stroke-dasharray="1.2 1"/><rect x="0" y="622.3" width="1.8" height="1.8" fill="#3a8ee0"/><rect x="11.2" y="622.3" width="1.8" height="1.8" fill="#3a8ee0"/></g><g transform="translate(297.3,0)"><path d="M1 623.2 H12" stroke="#555" stroke-width="0.9"/><path d="M0.8 624 V631 M12 624 V631" stroke="#888" stroke-width="0.9"/><path d="M12 625.5 V631" stroke="#e08080" stroke-width="0.9" stroke-dasharray="1.2 1"/><rect x="0" y="622.3" width="1.8" height="1.8" fill="#3a8ee0"/><rect x="11.2" y="622.3" width="1.8" height="1.8" fill="#3a8ee0"/></g><g transform="translate(339.3,0)"><path d="M1 623.2 H12" stroke="#555" stroke-width="0.9"/><path d="M0.8 624 V631 M12 624 V631" stroke="#888" stroke-width="0.9"/><path d="M12 625.5 V631" stroke="#e08080" stroke-width="0.9" stroke-dasharray="1.2 1"/><rect x="0" y="622.3" width="1.8" height="1.8" fill="#3a8ee0"/><rect x="11.2" y="622.3" width="1.8" height="1.8" fill="#3a8ee0"/></g>
 <g transform="translate(149.3,0)"><path d="M0 625 L2.5 622.3 H10.3 V631 H0Z" fill="#5aa6e6"/><path d="M7.8 625 L10.3 622.3 V631 H7.8Z" fill="#3c8cd2"/><path d="M0 625 L2.5 622.3 H10.3 L7.8 625Z" fill="#86c6f4"/><path d="M12.4 624 V631" stroke="#444" stroke-width="1"/><path d="M11 625 L12.4 622.5 L13.8 625Z" fill="#444"/></g><g transform="translate(191.5,0)"><path d="M0 625 L2.5 622.3 H10.3 V631 H0Z" fill="#5aa6e6"/><path d="M7.8 625 L10.3 622.3 V631 H7.8Z" fill="#3c8cd2"/><path d="M0 625 L2.5 622.3 H10.3 L7.8 625Z" fill="#86c6f4"/><path d="M12.4 624 V631" stroke="#444" stroke-width="1"/><path d="M11 625 L12.4 622.5 L13.8 625Z" fill="#444"/></g><g transform="translate(233.8,0)"><path d="M0 625 L2.5 622.3 H10.3 V631 H0Z" fill="#5aa6e6"/><path d="M7.8 625 L10.3 622.3 V631 H7.8Z" fill="#3c8cd2"/><path d="M0 625 L2.5 622.3 H10.3 L7.8 625Z" fill="#86c6f4"/><path d="M12.4 624 V631" stroke="#444" stroke-width="1"/><path d="M11 625 L12.4 622.5 L13.8 625Z" fill="#444"/></g><g transform="translate(318.3,0)"><path d="M0 625 L2.5 622.3 H10.3 V631 H0Z" fill="#5aa6e6"/><path d="M7.8 625 L10.3 622.3 V631 H7.8Z" fill="#3c8cd2"/><path d="M0 625 L2.5 622.3 H10.3 L7.8 625Z" fill="#86c6f4"/><path d="M12.4 624 V631" stroke="#444" stroke-width="1"/><path d="M11 625 L12.4 622.5 L13.8 625Z" fill="#444"/></g><g transform="translate(360.3,0)"><path d="M0 625 L2.5 622.3 H10.3 V631 H0Z" fill="#5aa6e6"/><path d="M7.8 625 L10.3 622.3 V631 H7.8Z" fill="#3c8cd2"/><path d="M0 625 L2.5 622.3 H10.3 L7.8 625Z" fill="#86c6f4"/><path d="M12.4 624 V631" stroke="#444" stroke-width="1"/><path d="M11 625 L12.4 622.5 L13.8 625Z" fill="#444"/></g>
 <path d="M372.5 616.7 H383 V620 L378.6 624 V631 H377 V624 L372.5 620Z" fill="#5a5a5a"/>
 <g transform="translate(1182 630)"><circle r="4.2" fill="none" stroke="#888" stroke-width="2.6"/><path d="M0 -7 V-4 M-6 -3.5 L-3.5 -2 M6 -3.5 L3.5 -2" stroke="#888" stroke-width="2.2"/></g>
</svg>

</body></html>
